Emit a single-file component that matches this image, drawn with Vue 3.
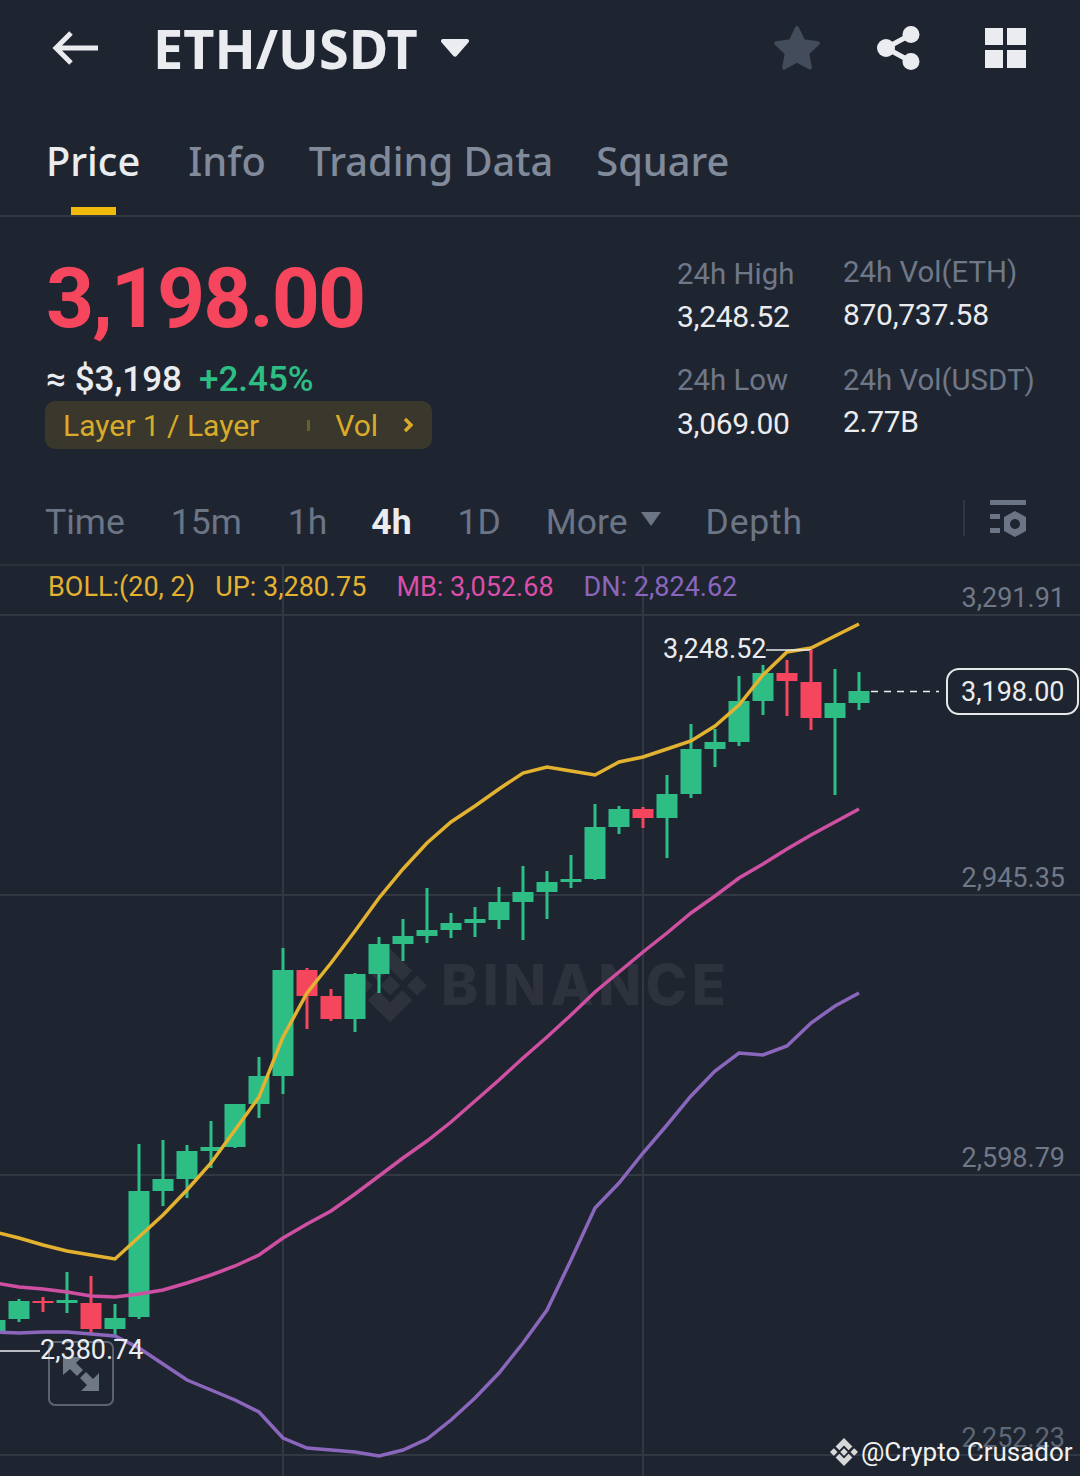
<template>
  <div class="screen">
    <header class="topbar">
      <svg class="back" viewBox="0 0 46 36" width="46" height="36">
        <path d="M19 3 4 18l15 15M5 18h41" fill="none" stroke="#eaecef" stroke-width="5" />
      </svg>
      <h1 class="pair">ETH/USDT</h1>
      <svg class="caret" viewBox="0 0 28 18" width="28" height="18">
        <path d="M2 0h24a2 2 0 0 1 1.600 3.200L15.600 17a2 2 0 0 1-3.200 0L.4 3.200A2 2 0 0 1 2 0z" fill="#eaecef" />
      </svg>
      <div class="actions">
        <svg class="star" viewBox="0 0 46 46" width="46" height="46">
          <path d="M23 3l6.300 13.300 14.500 1.900-10.600 10 2.700 14.400L23 35.500 10.100 42.600l2.700-14.400-10.600-10 14.500-1.900z" fill="#434c5b" stroke="#434c5b" stroke-width="4" stroke-linejoin="round" />
        </svg>
        <svg class="share" viewBox="0 0 44 44" width="44" height="44">
          <path d="M34 8.500 9 22l25 13.500" fill="none" stroke="#eaecef" stroke-width="5" />
          <circle cx="34" cy="8.500" r="8.500" fill="#eaecef" />
          <circle cx="9" cy="22" r="9" fill="#eaecef" />
          <circle cx="34" cy="35.500" r="8.500" fill="#eaecef" />
        </svg>
        <svg class="grid-ic" viewBox="0 0 41 40" width="41" height="40">
          <path d="M0 0h18v17H0zM22 0h19v17H22zM0 22h18v18H0zM22 22h19v18H22z" fill="#eaecef" />
        </svg>
      </div>
    </header>

    <nav class="tabs">
      <span v-for="(t, i) in tabs" :key="t" class="tab" :class="{ active: i === 0 }">{{ t }}</span>
    </nav>

    <section class="summary">
      <div class="left">
        <div class="price">3,198.00</div>
        <div class="sub">
          <span class="usd">≈ $3,198</span>
          <span class="pct">+2.45%</span>
        </div>
        <div class="tag">
          <span class="tag-name">Layer 1 / Layer</span>
          <i class="tag-sep"></i>
          <span class="tag-vol">Vol</span>
          <svg viewBox="0 0 10 16" width="10" height="16">
            <path d="M2 2l6 6-6 6" fill="none" stroke="#d9ab2a" stroke-width="3.500" />
          </svg>
        </div>
      </div>
      <div class="stat-col">
        <div class="stat"><span>24h High</span><b>3,248.52</b></div>
        <div class="stat"><span>24h Low</span><b>3,069.00</b></div>
      </div>
      <div class="stat-col vol">
        <div class="stat"><span>24h Vol(ETH)</span><b>870,737.58</b></div>
        <div class="stat"><span>24h Vol(USDT)</span><b>2.77B</b></div>
      </div>
    </section>

    <div class="intervals">
      <span class="iv w-time">Time</span>
      <span class="iv w-15">15m</span>
      <span class="iv w-1h">1h</span>
      <span class="iv on w-4h">4h</span>
      <span class="iv w-1d">1D</span>
      <span class="iv">More</span>
      <svg class="more-caret" viewBox="0 0 20 14" width="20" height="14">
        <path d="M0 0h20L10 14z" fill="#6c7585" />
      </svg>
      <span class="iv depth">Depth</span>
      <i class="iv-sep"></i>
      <svg class="iv-settings" viewBox="0 0 36 37" width="36" height="37">
        <path d="M0 0h36v5H0zM0 14h10v5H0zM0 28h10v5H0z" fill="#6c7585" />
        <path fill-rule="evenodd" d="M25 11l11 6v14l-11 6-11-6V17zM25 19a5 5 0 1 0 .01 0z" fill="#6c7585" />
      </svg>
    </div>

    <section class="chart">
      <svg class="plot" viewBox="0 566 1080 910" width="1080" height="910">
        <g stroke="#323842" stroke-width="2">
          <path v-for="y in gridY" :key="y" :d="`M0 ${y}H1080`" />
          <path v-for="x in gridX" :key="x" :d="`M${x} 566V1476`" />
        </g>

        <g fill="#2d323c">
          <path
            v-for="(d, i) in logoParts"
            :key="i"
            :d="d"
            transform="translate(390 985.500) scale(37)"
          />
        </g>
        <text class="mark" x="441" y="1005">BINANCE</text>

        <g v-for="c in candles" :key="c.x" :fill="c.up ? '#2ebd85' : '#f6465d'">
          <rect :x="c.x - 1.500" :y="c.hi" width="3" :height="c.lo - c.hi" />
          <rect :x="c.x - 10.500" :y="c.top" width="21" :height="c.bot - c.top" />
        </g>

        <polyline :points="line(yellow)" fill="none" stroke="#e3b230" stroke-width="3.500" />
        <polyline :points="line(magenta)" fill="none" stroke="#cf4fa3" stroke-width="3.500" />
        <polyline :points="line(purple)" fill="none" stroke="#8a66bd" stroke-width="3.500" />

        <text v-for="a in axis" :key="a.v" class="axis" :class="{ dim: a.dim }" x="1065" :y="a.y">{{ a.v }}</text>

        <path d="M766 650h45M0 1351h40" stroke="#eaecef" stroke-width="1.500" />
        <path d="M811 650v3" stroke="#f6465d" stroke-width="3" />
        <text class="mark-price" x="663" y="658">3,248.52</text>

        <path d="M871 691.500h68" stroke="#eaecef" stroke-width="1.500" stroke-dasharray="7 6" />
        <rect x="947" y="669" width="131" height="45" rx="12" fill="#1f2530" stroke="#e6e8ea" stroke-width="2" />
        <text class="mark-price" x="961" y="701">3,198.00</text>

        <rect x="49" y="1342" width="64" height="63" rx="6" fill="none" stroke="#5b6370" stroke-width="2" />
        <path d="M63 1357h19l-6 6 7 7-6 6-7-7-7 6z" fill="#6f7885" />
        <path d="M99 1391H81l6-6-7-7 6-6 7 7 6-6z" fill="#6f7885" />
        <text class="mark-price" x="40" y="1359">2,380.74</text>

        <g fill="#d8d8d8">
          <path v-for="(d, i) in logoParts" :key="i" :d="d" transform="translate(844 1452) scale(14)" />
        </g>
        <text class="credit" x="861" y="1461">@Crypto Crusador</text>
      </svg>

      <div class="legend">
        <span class="c-y">BOLL:(20, 2)</span>
        <span class="c-y">UP: 3,280.75</span>
        <span class="c-m">MB: 3,052.68</span>
        <span class="c-p">DN: 2,824.62</span>
      </div>
    </section>
  </div>
</template>

<script setup>
const tabs = ['Price', 'Info', 'Trading Data', 'Square']
const gridY = [615, 895, 1175, 1455]
const gridX = [283, 643]

const axis = [
  { v: '3,291.91', y: 607 },
  { v: '2,945.35', y: 887 },
  { v: '2,598.79', y: 1167 },
  { v: '2,252.23', y: 1447, dim: true },
]

// x starts at -5, one candle every 24px: [hi, lo, bodyTop, bodyBottom, up]
const rows = [
  [1316, 1337, 1320, 1333, 1],
  [1299, 1322, 1301, 1319, 1],
  [1297, 1312, 1301, 1303, 0],
  [1272, 1313, 1300, 1303, 1],
  [1276, 1335, 1303, 1329, 0],
  [1304, 1335, 1318, 1329, 1],
  [1144, 1319, 1191, 1317, 1],
  [1140, 1206, 1179, 1191, 1],
  [1145, 1198, 1151, 1179, 1],
  [1121, 1168, 1147, 1151, 1],
  [1104, 1148, 1104, 1147, 1],
  [1057, 1118, 1076, 1104, 1],
  [948, 1094, 970, 1076, 1],
  [968, 1029, 970, 996, 0],
  [989, 1021, 996, 1019, 0],
  [973, 1032, 974, 1019, 1],
  [937, 993, 944, 974, 1],
  [919, 961, 936, 944, 1],
  [888, 943, 930, 936, 1],
  [913, 938, 923, 930, 1],
  [907, 937, 919, 923, 1],
  [887, 929, 902, 920, 1],
  [866, 940, 892, 902, 1],
  [871, 919, 882, 892, 1],
  [855, 888, 879, 882, 1],
  [804, 880, 827, 879, 1],
  [806, 834, 809, 827, 1],
  [807, 828, 809, 818, 0],
  [775, 858, 794, 818, 1],
  [724, 798, 749, 794, 1],
  [729, 767, 742, 749, 1],
  [676, 746, 701, 742, 1],
  [665, 715, 673, 701, 1],
  [660, 716, 673, 681, 0],
  [650, 730, 682, 718, 0],
  [669, 795, 703, 718, 1],
  [672, 710, 691, 703, 1],
]

const candles = rows.map(([hi, lo, top, bot, up], i) => ({ x: -5 + i * 24, hi, lo, top, bot, up }))

const yellow = [1232, 1238, 1245, 1251, 1255, 1259, 1237, 1215, 1190, 1163, 1130, 1097, 1037, 993, 963, 931, 898, 869, 843, 822, 806, 789, 773, 767, 771, 775, 762, 757, 749, 741, 726, 705, 675, 652, 648, 636, 624]
const magenta = [1283, 1287, 1289, 1292, 1296, 1297, 1294, 1290, 1283, 1275, 1266, 1255, 1238, 1224, 1211, 1194, 1176, 1158, 1141, 1122, 1101, 1080, 1058, 1037, 1015, 992, 972, 952, 933, 913, 896, 878, 864, 849, 835, 822, 809]
const purple = [1332, 1333, 1332, 1332, 1334, 1336, 1348, 1364, 1380, 1390, 1400, 1412, 1438, 1448, 1450, 1452, 1456, 1450, 1439, 1420, 1398, 1373, 1343, 1310, 1260, 1208, 1183, 1153, 1125, 1096, 1071, 1053, 1055, 1046, 1023, 1006, 993]

const line = (ys) => ys.map((y, i) => `${-5 + i * 24},${y}`).join(' ')

const diamond = (cx, cy, r) => `M${cx} ${cy - r}L${cx + r} ${cy}L${cx} ${cy + r}L${cx - r} ${cy}Z`
const logoParts = [
  diamond(0, 0, 0.27),
  diamond(-0.73, 0, 0.27),
  diamond(0.73, 0, 0.27),
  'M0 -1L.6 -.4L.33 -.13L0 -.46L-.33 -.13L-.6 -.4Z',
  'M0 1L.6 .4L.33 .13L0 .46L-.33 .13L-.6 .4Z',
]
</script>

<style>
body {
  background: #1f2530;
}
</style>

<style scoped>
.screen {
  width: 1080px;
  height: 1476px;
  overflow: hidden;
  background: #1f2530;
  color: #eaecef;
  font-family: "Noto Sans", sans-serif;
}

.topbar {
  display: flex;
  align-items: center;
  height: 96px;
  padding: 0 54px 0 52px;
}
.back {
  margin-right: 55px;
}
.pair {
  margin: 0 23px 0 0;
  font-size: 54px;
  font-weight: 700;
  line-height: 1;
}
.actions {
  display: flex;
  align-items: center;
  margin-left: auto;
}
.star {
  margin-right: 57px;
}
.share {
  margin-right: 64px;
}

.tabs {
  display: flex;
  height: 121px;
  padding: 39px 0 0 46px;
  box-sizing: border-box;
  border-bottom: 2px solid #323842;
}
.tab {
  position: relative;
  height: 52px;
  font-size: 39.800px;
  font-weight: 500;
  line-height: 52px;
  color: #808a9a;
}
.tab:nth-child(1) {
  margin-right: 48px;
}
.tab:nth-child(2) {
  margin-right: 43px;
}
.tab:nth-child(3) {
  margin-right: 43px;
}
.tab.active {
  color: #eaecef;
}
.tab.active::after {
  content: "";
  position: absolute;
  left: 25px;
  bottom: -28px;
  width: 45px;
  height: 8px;
  background: #f0b90b;
}

.summary {
  display: flex;
  height: 269px;
  box-sizing: border-box;
}
.left {
  width: 677px;
  padding: 40px 0 0 45px;
  box-sizing: border-box;
}
.price {
  padding-left: 1px;
  font-family: Roboto, sans-serif;
  font-size: 84px;
  font-weight: 700;
  line-height: 84px;
  letter-spacing: -2px;
  color: #f6465d;
}
.sub {
  display: flex;
  gap: 17px;
  margin-top: 17px;
  padding-left: 1px;
  font-family: Roboto, sans-serif;
  font-size: 35px;
  font-weight: 500;
  line-height: 43px;
}
.pct {
  color: #2ebd85;
}
.tag {
  display: flex;
  align-items: center;
  width: 387px;
  height: 48px;
  padding-left: 18px;
  box-sizing: border-box;
  border-radius: 10px;
  background: #3a372c;
  font-family: Roboto, sans-serif;
  font-size: 30px;
  color: #d9ab2a;
}
.tag-sep {
  width: 3px;
  height: 11px;
  margin: 0 25px 0 48px;
  background: #6d5e2c;
}
.tag-vol {
  margin-right: 25px;
}

.stat-col {
  display: flex;
  flex-direction: column;
  gap: 23px;
  width: 166px;
  padding-top: 37px;
}
.stat {
  display: flex;
  flex-direction: column;
  gap: 3px;
  font-family: Roboto, sans-serif;
  font-size: 30px;
  line-height: 40px;
  white-space: nowrap;
}
.stat span {
  color: #6f7888;
  font-size: 29.400px;
}
.stat b {
  font-weight: 400;
  letter-spacing: -0.3px;
}
.stat-col:not(.vol) .stat:last-child {
  gap: 4px;
}
.stat-col.vol {
  gap: 25px;
  margin-top: -2px;
}
.stat-col.vol .stat:last-child {
  gap: 2px;
}

.intervals {
  display: flex;
  align-items: center;
  height: 80px;
  padding: 0 0 6px 45px;
  box-sizing: border-box;
  border-bottom: 2px solid #2b313b;
}
.iv {
  font-family: Roboto, sans-serif;
  font-size: 35.500px;
  color: #6c7585;
}
.iv.on {
  color: #eaecef;
  font-weight: 700;
}
.iv.depth {
  letter-spacing: 0.8px;
}
.w-time {
  margin-right: 46px;
}
.w-15 {
  margin-right: 46px;
}
.w-1h {
  margin-right: 44px;
}
.w-4h {
  margin-right: 46px;
}
.w-1d {
  margin-right: 45px;
}
.more-caret {
  margin: -6px 45px 0 13px;
}
.iv-sep {
  width: 2px;
  height: 36px;
  margin: -8px 25px 0 auto;
  background: #323842;
}
.iv-settings {
  margin: -8px 54px 0 0;
}

.chart {
  position: relative;
  height: 911px;
  overflow: hidden;
}
.plot {
  position: absolute;
  left: 0;
  top: 0;
}
.legend {
  position: relative;
  display: flex;
  gap: 20px;
  padding: 3px 0 0 48px;
  font-family: Roboto, sans-serif;
  font-size: 27px;
  line-height: 36px;
}
.legend .c-m {
  margin-left: 10px;
}
.legend .c-p {
  margin-left: 10px;
}
.c-y {
  color: #e3b230;
}
.c-m {
  color: #d94fa8;
}
.c-p {
  color: #8a66bd;
}

.axis {
  font-family: Roboto, sans-serif;
  font-size: 27px;
  fill: #6f7888;
  text-anchor: end;
}
.axis.dim {
  fill: #5d6675;
}
.mark {
  font-family: Inter, sans-serif;
  font-size: 56px;
  font-weight: 800;
  letter-spacing: 4.500px;
  fill: #2d323c;
}
.mark-price {
  font-family: Roboto, sans-serif;
  font-size: 27px;
  fill: #eaecef;
}
.credit {
  font-family: Roboto, sans-serif;
  font-size: 26px;
  fill: #f2f2f2;
}
</style>
